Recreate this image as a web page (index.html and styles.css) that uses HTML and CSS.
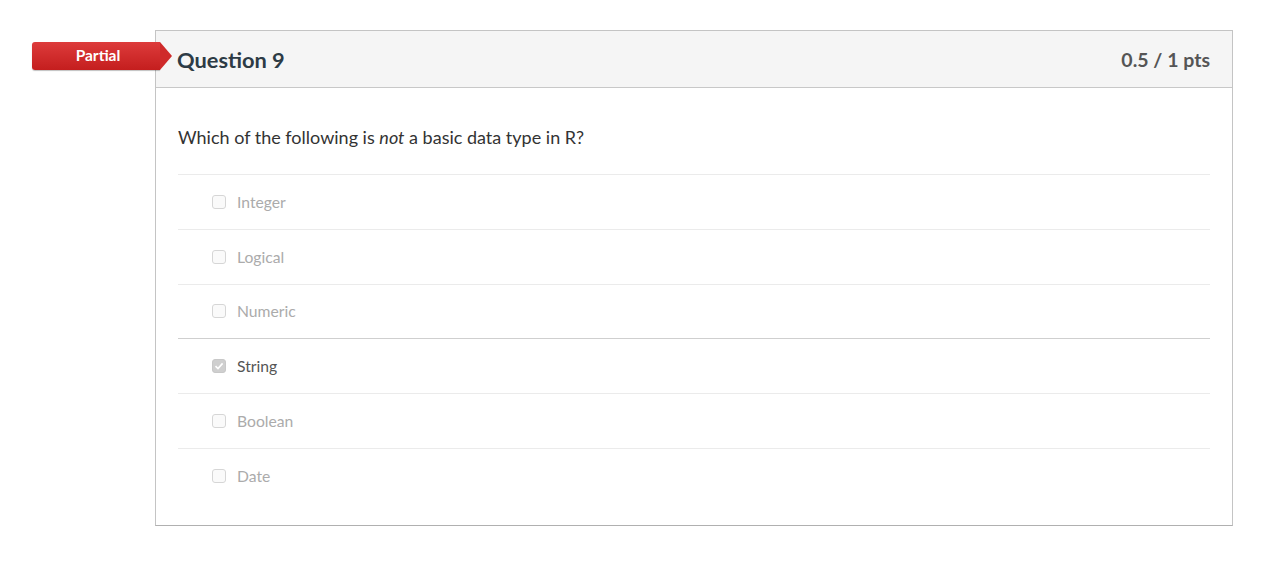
FILE: index.html
```html
<!DOCTYPE html>
<html>
<head>
<meta charset="utf-8">
<link rel="stylesheet" href="styles.css">
</head>
<body>
<div class="page">
  <div class="badge-col">
    <div class="badge">Partial</div>
  </div>
  <div class="card">
    <div class="card-header">
      <span class="q-title">Question 9</span>
      <span class="q-points">0.5 / 1 pts</span>
    </div>
    <div class="card-body">
      <div class="q-text">Which of the following is <em>not</em> a basic data type in R?</div>
      <div class="answers">
        <div class="answer"><span class="box"></span><span class="label">Integer</span></div>
        <div class="answer"><span class="box"></span><span class="label">Logical</span></div>
        <div class="answer"><span class="box"></span><span class="label">Numeric</span></div>
        <div class="answer selected"><span class="box checked"><svg viewBox="0 0 12 12" width="12" height="12"><path d="M2.5 6.2 L5 8.6 L9.6 3.4" fill="none" stroke="#fff" stroke-width="1.6"/></svg></span><span class="label">String</span></div>
        <div class="answer after-selected"><span class="box"></span><span class="label">Boolean</span></div>
        <div class="answer"><span class="box"></span><span class="label">Date</span></div>
      </div>
    </div>
  </div>
</div>
</body>
</html>
```
FILE: styles.css
```css
html, body {
  margin: 0;
  padding: 0;
  background: #fff;
  font-family: Lato, "Open Sans", "Liberation Sans", sans-serif;
}
.page {
  display: flex;
  padding-top: 30px;
}
.badge-col {
  width: 155px;
  flex: none;
  position: relative;
}
.badge {
  position: absolute;
  left: 32px;
  top: 12px;
  width: 128px;
  height: 28px;
  line-height: 27px;
  background: linear-gradient(#dd3b3b, #c41e1e);
  color: #fff;
  font-weight: 700;
  font-size: 15.5px;
  text-align: center;
  border-radius: 3px 0 0 3px;
  box-sizing: border-box;
  padding-left: 4px;
  box-shadow: 0 1px 1px rgba(0,0,0,0.25);
}
.badge::after {
  content: "";
  position: absolute;
  right: -12px;
  top: 0;
  border-top: 14px solid transparent;
  border-bottom: 14px solid transparent;
  border-left: 12px solid #cf2a2a;
}
.card {
  width: 1078px;
  box-sizing: border-box;
  border: 1px solid #c4c4c4;
  border-bottom-color: #b0b0b0;
}
.card-header {
  height: 56px;
  background: #f5f5f5;
  border-bottom: 1px solid #c8c8c8;
  display: flex;
  align-items: center;
  justify-content: space-between;
  padding: 0 22px 0 21px;
}
.q-title {
  font-size: 21.8px;
  font-weight: 700;
  color: #2d3b45;
}
.q-points {
  font-size: 19.5px;
  font-weight: 700;
  color: #555;
}
.card-body {
  padding: 37px 22px 22px 22px;
}
.q-text {
  font-size: 18px;
  line-height: 24px;
  color: #333;
  margin-bottom: 25px;
}
.answer {
  height: 53.8px;
  border-top: 1px solid #ebebeb;
  display: flex;
  align-items: center;
  padding-left: 34px;
}
.answer.selected {
  border-top-color: #cfcfcf;
}
.box {
  width: 12px;
  height: 12px;
  border: 1px solid #d6d6d6;
  border-radius: 3px;
  background: #fafafa;
  margin-right: 11px;
  display: flex;
  align-items: center;
  justify-content: center;
}
.box.checked {
  background: #cfcfcf;
  border-color: #c8c8c8;
}
.label {
  font-size: 15.7px;
  color: #ababab;
}
.selected .label {
  color: #555;
}
```
